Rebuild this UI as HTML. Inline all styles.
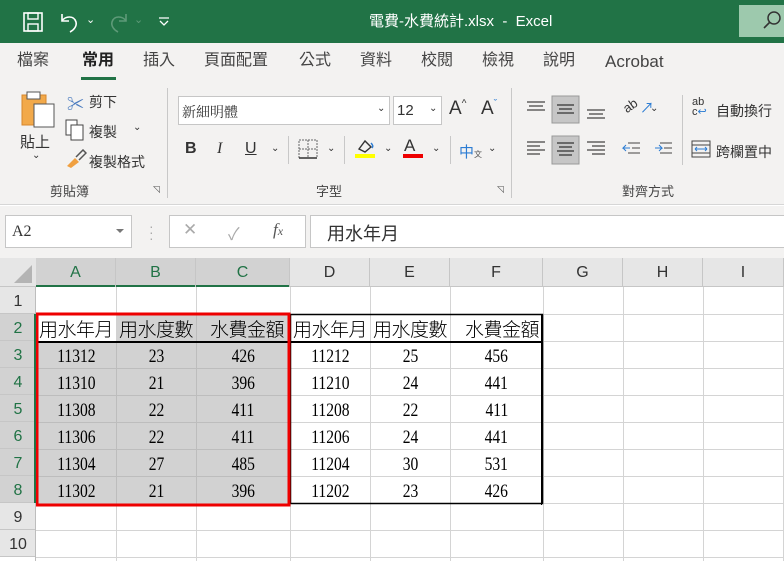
<!DOCTYPE html>
<html><head><meta charset="utf-8"><style>
*{margin:0;padding:0;box-sizing:border-box}
body{width:784px;height:561px;overflow:hidden;background:#fff;font-family:"Liberation Sans","Noto Sans CJK TC",sans-serif;position:relative;color:#333}
.a{position:absolute;white-space:nowrap}
.title{left:0;top:0;width:784px;height:43px;background:#217346}
.tabs{left:0;top:43px;width:784px;height:162px;background:#f3f2f1;border-bottom:1px solid #d6d6d6}
.tab{top:50px;font-size:16px;color:#444;height:22px;line-height:22px}
.rb{font-size:14px;color:#333}
.grp{top:181px;font-size:13px;color:#444}
.sep{width:1px;background:#c8c8c8}
.cell{position:absolute;height:27px;line-height:27px;text-align:center;font-family:"Liberation Serif","Noto Serif CJK SC",serif;font-size:19px;color:#000}
.cell span{display:inline-block;transform:scaleX(0.82)}
.hd{font-family:"Noto Sans CJK TC",sans-serif;font-size:19px;letter-spacing:-0.5px;font-weight:300}
.ch{position:absolute;top:258px;height:29px;line-height:29px;text-align:center;font-size:16px;color:#333;border-right:1px solid #c6c6c6}
.rh{position:absolute;left:0;width:36px;height:27px;line-height:30px;text-align:center;font-size:16px;color:#333;border-bottom:1px solid #c6c6c6;background:#e6e6e6}
</style></head><body>
<div class="a title"></div>
<svg class="a" style="left:22px;top:12px" width="22" height="20" viewBox="0 0 22 20"><rect x="2" y="1" width="18" height="18" fill="none" stroke="#fff" stroke-width="1.6"/><rect x="6" y="1" width="10" height="6" fill="none" stroke="#fff" stroke-width="1.4"/><rect x="6" y="12" width="10" height="7" fill="none" stroke="#fff" stroke-width="1.4"/></svg>
<svg class="a" style="left:58px;top:10px" width="24" height="24" viewBox="0 0 24 24"><path d="M4 4v7h7" fill="none" stroke="#fff" stroke-width="1.6"/><path d="M4 11c3-5 12-6 14 1 1 4-2 8-6 10" fill="none" stroke="#fff" stroke-width="1.6"/></svg>
<div class="a" style="left:86px;top:13px;color:#fff;font-size:11px">⌄</div>
<svg class="a" style="left:106px;top:10px" width="24" height="24" viewBox="0 0 24 24"><path d="M20 4v7h-7" fill="none" stroke="#5e9a78" stroke-width="1.6"/><path d="M20 11c-3-5-12-6-14 1-1 4 2 8 6 10" fill="none" stroke="#5e9a78" stroke-width="1.6"/></svg>
<div class="a" style="left:134px;top:13px;color:#5e9a78;font-size:11px">⌄</div>
<svg class="a" style="left:158px;top:17px" width="12" height="10"><path d="M1 1h10M2 4l4 4 4-4" fill="none" stroke="#fff" stroke-width="1.3"/></svg>
<div class="a" style="left:369px;top:10px;color:#fff;font-size:15px">電費-水費統計.xlsx &nbsp;- &nbsp;Excel</div>
<div class="a" style="left:739px;top:5px;width:45px;height:32px;background:#9dc9ad"></div>
<svg class="a" style="left:762px;top:10px" width="20" height="20"><circle cx="12" cy="8" r="6" fill="none" stroke="#333" stroke-width="1.5"/><path d="M8 12l-6 6" stroke="#333" stroke-width="1.6"/></svg>
<div class="a tabs"></div>
<div class="a tab" style="left:17px">檔案</div>
<div class="a tab" style="left:82px;color:#222;font-weight:bold">常用</div>
<div class="a" style="left:81px;top:77px;width:35px;height:3px;background:#217346"></div>
<div class="a tab" style="left:143px">插入</div>
<div class="a tab" style="left:204px">頁面配置</div>
<div class="a tab" style="left:299px">公式</div>
<div class="a tab" style="left:360px">資料</div>
<div class="a tab" style="left:421px">校閱</div>
<div class="a tab" style="left:482px">檢視</div>
<div class="a tab" style="left:543px">說明</div>
<div class="a tab" style="left:605px;top:51px;font-size:17px">Acrobat</div>
<svg class="a" style="left:20px;top:90px" width="36" height="40"><rect x="2" y="5" width="24" height="30" fill="#f2a94a" stroke="#d7862c"/><rect x="7" y="2" width="13" height="7" fill="#fff" stroke="#555"/><rect x="14" y="14" width="20" height="23" fill="#fff" stroke="#555"/></svg>
<div class="a rb" style="left:20px;top:131px;font-size:15px">貼上</div>
<div class="a" style="left:32px;top:150px;font-size:10px">⌄</div>
<div class="a" style="left:67px;top:90px;font-size:17px;color:#4a7bbf">✂</div>
<div class="a rb" style="left:89px;top:92px">剪下</div>
<svg class="a" style="left:65px;top:119px" width="20" height="22"><rect x="1" y="1" width="11" height="15" fill="#fff" stroke="#444"/><rect x="6" y="6" width="12" height="15" fill="#fff" stroke="#444"/></svg>
<div class="a rb" style="left:89px;top:122px">複製</div>
<div class="a" style="left:133px;top:122px;font-size:10px">⌄</div>
<svg class="a" style="left:65px;top:149px" width="22" height="20"><path d="M2 17l8-8 4 4-8 6z" fill="#f0a040"/><path d="M11 8l7-7 3 3-7 7" fill="none" stroke="#555" stroke-width="1.5"/></svg>
<div class="a rb" style="left:89px;top:152px">複製格式</div>
<div class="a grp" style="left:50px">剪貼簿</div>
<div class="a" style="left:153px;top:184px;font-size:9px;color:#555">◹</div>
<div class="a sep" style="left:167px;top:88px;height:110px"></div>
<div class="a" style="left:178px;top:96px;width:212px;height:29px;background:#fff;border:1px solid #c6c6c6"></div>
<div class="a rb" style="left:182px;top:102px;font-family:'Noto Serif CJK SC',serif">新細明體</div>
<div class="a" style="left:377px;top:103px;font-size:10px">⌄</div>
<div class="a" style="left:393px;top:96px;width:49px;height:29px;background:#fff;border:1px solid #c6c6c6"></div>
<div class="a rb" style="left:397px;top:102px;font-size:15px">12</div>
<div class="a" style="left:429px;top:103px;font-size:10px">⌄</div>
<div class="a" style="left:449px;top:98px;font-size:19px">A<sup style="font-size:10px">^</sup></div>
<div class="a" style="left:481px;top:98px;font-size:19px">A<sup style="font-size:10px;color:#2b7cd3">ˇ</sup></div>
<div class="a" style="left:185px;top:140px;font-size:16px;font-weight:bold">B</div>
<div class="a" style="left:217px;top:140px;font-size:16px;font-style:italic;font-family:'Liberation Serif'">I</div>
<div class="a" style="left:245px;top:140px;font-size:16px;text-decoration:underline">U</div>
<div class="a" style="left:271px;top:143px;font-size:10px">⌄</div>
<div class="a sep" style="left:288px;top:136px;height:28px"></div>
<svg class="a" style="left:298px;top:139px" width="20" height="20"><rect x="1" y="1" width="18" height="18" fill="none" stroke="#666" stroke-dasharray="2 1"/><path d="M10 1v18M1 10h18" stroke="#666" stroke-dasharray="2 1"/><path d="M1 19h18" stroke="#333" stroke-width="1.5"/></svg>
<div class="a" style="left:327px;top:143px;font-size:10px">⌄</div>
<div class="a sep" style="left:344px;top:136px;height:28px"></div>
<svg class="a" style="left:354px;top:137px" width="22" height="22"><path d="M5 12l6-8 6 6-6 5z" fill="none" stroke="#333" stroke-width="1.4"/><path d="M17 6q3 3 1 5" stroke="#2b7cd3" fill="none" stroke-width="1.5"/><rect x="1" y="17" width="20" height="4" fill="#ffff00"/></svg>
<div class="a" style="left:384px;top:143px;font-size:10px">⌄</div>
<div class="a" style="left:404px;top:136px;font-size:17px">A</div>
<div class="a" style="left:403px;top:154px;width:20px;height:4px;background:#e00"></div>
<div class="a" style="left:432px;top:143px;font-size:10px">⌄</div>
<div class="a sep" style="left:450px;top:136px;height:28px"></div>
<div class="a" style="left:459px;top:141px;font-size:15px;color:#2b7cd3">中<span style="font-size:8px;color:#555">文</span></div>
<div class="a" style="left:488px;top:143px;font-size:10px">⌄</div>
<div class="a grp" style="left:316px">字型</div>
<div class="a" style="left:497px;top:184px;font-size:9px;color:#555">◹</div>
<div class="a sep" style="left:511px;top:88px;height:110px"></div>
<svg class="a" style="left:520px;top:94px" width="100" height="30"><path d="M7 8h18M9 12h14M7 16h18" stroke="#444" stroke-width="1.2"/><rect x="32" y="2" width="27" height="27" fill="#c6c6c6" stroke="#999"/><path d="M37 11h17M39 15h13M37 19h17" stroke="#333" stroke-width="1.2"/><path d="M67 16h18M69 20h14M67 24h18" stroke="#444" stroke-width="1.2"/></svg>
<div class="a" style="left:623px;top:98px;font-size:13px;color:#333;transform:rotate(-35deg)">ab</div>
<div class="a" style="left:640px;top:98px;color:#2b7cd3;font-size:14px">↗</div>
<div class="a" style="left:650px;top:103px;font-size:10px">⌄</div>
<svg class="a" style="left:520px;top:134px" width="180" height="32"><path d="M7 8h18M7 12h13M7 16h18M7 20h13" stroke="#444" stroke-width="1.2"/><rect x="32" y="2" width="27" height="28" fill="#c6c6c6" stroke="#999"/><path d="M37 9h17M39 13h13M37 17h17M39 21h13" stroke="#333" stroke-width="1.2"/><path d="M67 8h18M72 12h13M67 16h18M72 20h13" stroke="#444" stroke-width="1.2"/><path d="M108 9h12M112 14h8M108 19h12" stroke="#444"/><path d="M110 14h-7l3-3M103 14l3 3" stroke="#2b7cd3" fill="none"/><path d="M140 9h12M144 14h8M140 19h12" stroke="#444"/><path d="M135 14h7l-3-3M142 14l-3 3" stroke="#2b7cd3" fill="none"/></svg>
<div class="a sep" style="left:682px;top:95px;height:70px"></div>
<div class="a" style="left:692px;top:97px;font-size:11px;line-height:10px;color:#333">ab<br>c<span style="color:#2b7cd3">↩</span></div>
<div class="a rb" style="left:716px;top:101px">自動換行</div>
<svg class="a" style="left:691px;top:140px" width="20" height="18"><rect x="1" y="1" width="18" height="16" fill="none" stroke="#444"/><path d="M1 5h18M1 13h18" stroke="#444"/><path d="M4 9h12M4 9l2-2M4 9l2 2M16 9l-2-2M16 9l-2 2" stroke="#2b7cd3" fill="none"/></svg>
<div class="a rb" style="left:716px;top:142px">跨欄置中</div>
<div class="a grp" style="left:622px">對齊方式</div>
<div class="a" style="left:0;top:206px;width:784px;height:52px;background:#f3f2f1"></div>
<div class="a" style="left:5px;top:215px;width:127px;height:33px;background:#fff;border:1px solid #c6c6c6"></div>
<div class="a" style="left:12px;top:223px;font-size:16px;font-family:'Liberation Serif',serif;color:#333">A2</div>
<div class="a" style="left:116px;top:229px;border-left:4px solid transparent;border-right:4px solid transparent;border-top:4px solid #777"></div>
<div class="a" style="left:149px;top:223px;color:#aaa;font-size:14px;line-height:6px">·<br>·<br>·</div>
<div class="a" style="left:169px;top:215px;width:137px;height:33px;background:#fff;border:1px solid #c6c6c6"></div>
<div class="a" style="left:183px;top:220px;color:#aaa;font-size:17px">✕</div>
<div class="a" style="left:228px;top:220px;color:#aaa;font-size:17px">✓</div>
<div class="a" style="left:273px;top:220px;color:#555;font-size:17px;font-style:italic;font-family:'Liberation Serif',serif">f<span style="font-size:12px">x</span></div>
<div class="a" style="left:310px;top:215px;width:474px;height:33px;background:#fff;border:1px solid #c6c6c6;border-right:none"></div>
<div class="a" style="left:327px;top:220px;font-size:18px;font-family:'Noto Sans CJK TC',sans-serif;color:#333">用水年月</div>
<div class="a" style="left:0;top:258px;width:784px;height:29px;background:#e6e6e6;border-bottom:1px solid #c6c6c6"></div>
<div class="a" style="left:14px;top:265px;width:0;height:0;border-left:18px solid transparent;border-bottom:18px solid #b4b4b4"></div>
<div class="a" style="left:36px;top:258px;width:254px;height:29px;background:#d2d2d2;border-bottom:2px solid #217346"></div>
<div class="ch" style="left:36px;width:80px;color:#217346">A</div>
<div class="ch" style="left:116px;width:80px;color:#217346">B</div>
<div class="ch" style="left:196px;width:94px;color:#217346">C</div>
<div class="ch" style="left:290px;width:80px">D</div>
<div class="ch" style="left:370px;width:80px">E</div>
<div class="ch" style="left:450px;width:93px">F</div>
<div class="ch" style="left:543px;width:80px">G</div>
<div class="ch" style="left:623px;width:80px">H</div>
<div class="ch" style="left:703px;width:81px">I</div>
<svg class="a" style="left:0;top:287px" width="784" height="274">
<g stroke="#d4d4d4" stroke-width="1">
<path d="M116.5 0V274M196.5 0V274M290.5 0V274M370.5 0V274M450.5 0V274M543.5 0V274M623.5 0V274M703.5 0V274M783.5 0V274"/>
<path d="M36 27.5H784M36 54.5H784M36 81.5H784M36 108.5H784M36 135.5H784M36 162.5H784M36 189.5H784M36 216.5H784M36 243.5H784M36 270.5H784"/>
</g>
<rect x="36" y="28" width="254" height="189" fill="#d2d2d2"/>
<rect x="37" y="28" width="79" height="26" fill="#fff"/>
<g stroke="#bdbdbd"><path d="M116.5 54V217M196.5 28V217M36 81.5H290M36 108.5H290M36 135.5H290M36 162.5H290M36 189.5H290"/></g>
<rect x="290.5" y="27.5" width="252" height="189" fill="none" stroke="#000" stroke-width="1.5"/>
<path d="M36 55H543" stroke="#000" stroke-width="2"/>
<path d="M541.5 28V218" stroke="#000" stroke-width="1"/>
<rect x="37" y="27" width="252" height="191" fill="none" stroke="#e00" stroke-width="3"/>
</svg>
<div class="rh" style="top:287px">1</div>
<div class="rh" style="top:314px;background:#d2d2d2;color:#217346">2</div>
<div class="rh" style="top:341px;background:#d2d2d2;color:#217346">3</div>
<div class="rh" style="top:368px;background:#d2d2d2;color:#217346">4</div>
<div class="rh" style="top:395px;background:#d2d2d2;color:#217346">5</div>
<div class="rh" style="top:422px;background:#d2d2d2;color:#217346">6</div>
<div class="rh" style="top:449px;background:#d2d2d2;color:#217346">7</div>
<div class="rh" style="top:476px;background:#d2d2d2;color:#217346">8</div>
<div class="rh" style="top:503px">9</div>
<div class="rh" style="top:530px">10</div>
<div class="a" style="left:35px;top:287px;width:1px;height:274px;background:#bdbdbd"></div>
<div class="a" style="left:34px;top:314px;width:2px;height:189px;background:#217346"></div>
<div class="cell hd" style="left:36px;top:315px;width:80px">用水年月</div>
<div class="cell hd" style="left:116px;top:315px;width:80px">用水度數</div>
<div class="cell hd" style="left:196px;top:315px;width:94px;text-align:right;padding-right:6px">水費金額</div>
<div class="cell hd" style="left:290px;top:315px;width:80px">用水年月</div>
<div class="cell hd" style="left:370px;top:315px;width:80px">用水度數</div>
<div class="cell hd" style="left:450px;top:315px;width:93px;text-align:right;padding-right:4px">水費金額</div>
<div class="cell" style="left:36px;top:343px;width:80px"><span>11312</span></div><div class="cell" style="left:116px;top:343px;width:80px"><span>23</span></div><div class="cell" style="left:196px;top:343px;width:94px"><span>426</span></div><div class="cell" style="left:290px;top:343px;width:80px"><span>11212</span></div><div class="cell" style="left:370px;top:343px;width:80px"><span>25</span></div><div class="cell" style="left:450px;top:343px;width:93px"><span>456</span></div>
<div class="cell" style="left:36px;top:370px;width:80px"><span>11310</span></div><div class="cell" style="left:116px;top:370px;width:80px"><span>21</span></div><div class="cell" style="left:196px;top:370px;width:94px"><span>396</span></div><div class="cell" style="left:290px;top:370px;width:80px"><span>11210</span></div><div class="cell" style="left:370px;top:370px;width:80px"><span>24</span></div><div class="cell" style="left:450px;top:370px;width:93px"><span>441</span></div>
<div class="cell" style="left:36px;top:397px;width:80px"><span>11308</span></div><div class="cell" style="left:116px;top:397px;width:80px"><span>22</span></div><div class="cell" style="left:196px;top:397px;width:94px"><span>411</span></div><div class="cell" style="left:290px;top:397px;width:80px"><span>11208</span></div><div class="cell" style="left:370px;top:397px;width:80px"><span>22</span></div><div class="cell" style="left:450px;top:397px;width:93px"><span>411</span></div>
<div class="cell" style="left:36px;top:424px;width:80px"><span>11306</span></div><div class="cell" style="left:116px;top:424px;width:80px"><span>22</span></div><div class="cell" style="left:196px;top:424px;width:94px"><span>411</span></div><div class="cell" style="left:290px;top:424px;width:80px"><span>11206</span></div><div class="cell" style="left:370px;top:424px;width:80px"><span>24</span></div><div class="cell" style="left:450px;top:424px;width:93px"><span>441</span></div>
<div class="cell" style="left:36px;top:451px;width:80px"><span>11304</span></div><div class="cell" style="left:116px;top:451px;width:80px"><span>27</span></div><div class="cell" style="left:196px;top:451px;width:94px"><span>485</span></div><div class="cell" style="left:290px;top:451px;width:80px"><span>11204</span></div><div class="cell" style="left:370px;top:451px;width:80px"><span>30</span></div><div class="cell" style="left:450px;top:451px;width:93px"><span>531</span></div>
<div class="cell" style="left:36px;top:478px;width:80px"><span>11302</span></div><div class="cell" style="left:116px;top:478px;width:80px"><span>21</span></div><div class="cell" style="left:196px;top:478px;width:94px"><span>396</span></div><div class="cell" style="left:290px;top:478px;width:80px"><span>11202</span></div><div class="cell" style="left:370px;top:478px;width:80px"><span>23</span></div><div class="cell" style="left:450px;top:478px;width:93px"><span>426</span></div>
</body></html>
